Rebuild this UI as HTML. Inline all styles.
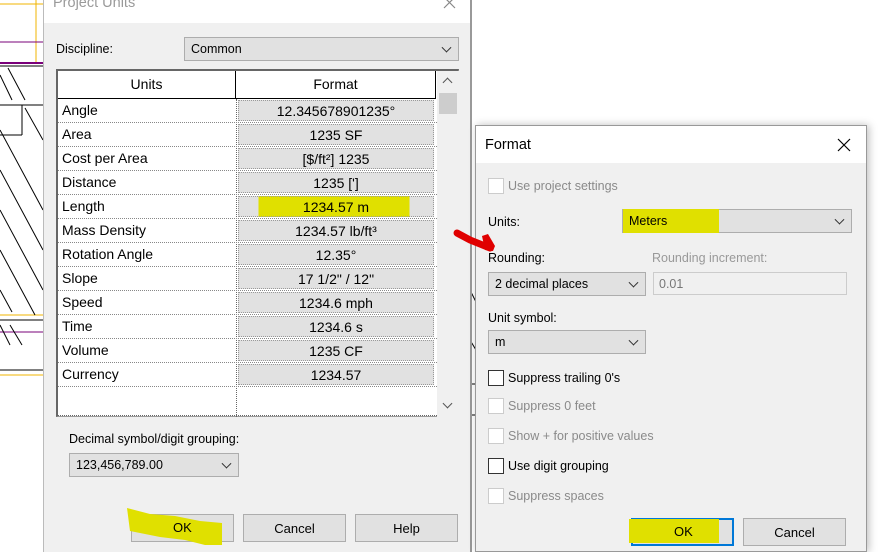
<!DOCTYPE html>
<html><head><meta charset="utf-8">
<style>
*{box-sizing:border-box;margin:0;padding:0}
body{width:891px;height:552px;overflow:hidden;background:#fff;position:relative;font-family:"Liberation Sans",sans-serif;color:#000}
.abs{position:absolute}
.sel{position:absolute;background:#e1e1e1;border:1px solid #adadad;font-size:12.5px;padding-left:6px;display:flex;align-items:center}
.sel .ch{position:absolute;right:8px;top:50%;width:7px;height:7px;border-right:1px solid #333;border-bottom:1px solid #333;transform:translateY(-70%) rotate(45deg)}
.btn{position:absolute;background:#e1e1e1;border:1px solid #adadad;font-size:13px;display:flex;align-items:center;justify-content:center}
.row{position:absolute;left:0;width:379px;height:24px;border-bottom:1px dotted #888}
.row .u{position:absolute;left:4px;top:3px;font-size:14px}
.row .f{position:absolute;left:180px;top:1px;width:196px;height:21px;background:#e1e1e1;border:1px dotted #999;font-size:14px;text-align:center;line-height:20px}
.cb{position:absolute;width:16px;height:16px;border:1px solid #333;background:#fff}
.cb.d{border-color:#ccc}
.lab{position:absolute;font-size:12.5px}
.g{color:#8a8a8a}
</style></head><body>
<svg class="abs" style="left:0;top:0" width="891" height="552">
<line x1="0" y1="4" x2="43" y2="4" stroke="#f0b400"/>
<line x1="36" y1="0" x2="36" y2="62" stroke="#f0b400"/>
<line x1="0" y1="42" x2="43" y2="42" stroke="#7a007a"/>
<line x1="0" y1="63" x2="43" y2="63" stroke="#7a007a" stroke-width="2"/>
<line x1="0" y1="66" x2="43" y2="66" stroke="#000"/>
<line x1="0" y1="105" x2="43" y2="105" stroke="#000"/>
<line x1="0" y1="135" x2="22" y2="135" stroke="#000"/>
<line x1="22" y1="105" x2="22" y2="135" stroke="#000"/>
<line x1="0" y1="315" x2="43" y2="315" stroke="#f0b400"/>
<line x1="0" y1="320" x2="43" y2="320" stroke="#000"/>
<line x1="0" y1="332" x2="43" y2="332" stroke="#7a007a"/>
<line x1="0" y1="370" x2="43" y2="370" stroke="#000"/>
<line x1="0" y1="375" x2="43" y2="375" stroke="#f0b400"/>
<g stroke="#000" stroke-width="1">
<line x1="0" y1="75" x2="12" y2="100"/><line x1="8" y1="68" x2="25" y2="100"/>
<line x1="0" y1="130" x2="43" y2="210"/><line x1="0" y1="170" x2="43" y2="250"/>
<line x1="0" y1="210" x2="43" y2="290"/><line x1="0" y1="250" x2="35" y2="315"/>
<line x1="0" y1="290" x2="12" y2="312"/><line x1="25" y1="108" x2="43" y2="140"/>
<line x1="0" y1="325" x2="10" y2="345"/><line x1="10" y1="325" x2="22" y2="345"/>
</g>
<g stroke="#000"><line x1="470" y1="290" x2="476" y2="302"/><line x1="470" y1="340" x2="476" y2="350"/><line x1="472" y1="384" x2="476" y2="384"/><line x1="472" y1="415" x2="476" y2="415"/></g>
</svg>
<div class="abs" style="left:43px;top:0;width:429px;height:552px;background:#f0f0f0;border-left:1px solid #bbb;border-right:2px solid #999">
 <div class="abs" style="left:0;top:0;width:426px;height:23px;background:#fff"></div>
 <div class="abs" style="left:9px;top:-5px;font-size:14.5px;color:#9a9a9a">Project Units</div>
 <svg class="abs" style="left:399px;top:0" width="14" height="10"><path d="M1 -3 L12 8 M12 -3 L1 8" stroke="#888" stroke-width="1.2"/></svg>
 <div class="lab" style="left:12px;top:42px">Discipline:</div>
 <div class="sel" style="left:140px;top:37px;width:275px;height:24px">Common<span class="ch"></span></div>
 <div class="abs" style="left:12px;top:69px;width:403px;height:348px;background:#fff;border:1px solid #999;border-left:2px solid #666;border-top:2px solid #666">
  <div class="abs" style="left:0;top:0;width:178px;height:28px;border-right:1px solid #000;border-bottom:1px solid #000;text-align:center;line-height:27px;font-size:14px">Units</div>
  <div class="abs" style="left:178px;top:0;width:200px;height:28px;border-bottom:1px solid #000;border-right:1px solid #000;text-align:center;line-height:27px;font-size:14px">Format</div>
  <div class="abs" style="left:178px;top:28px;width:0;height:318px;border-left:1px dotted #666"></div>
  <div class="row" style="top:28px"><span class="u">Angle</span><span class="f">12.345678901235°</span></div>
  <div class="row" style="top:52px"><span class="u">Area</span><span class="f">1235 SF</span></div>
  <div class="row" style="top:76px"><span class="u">Cost per Area</span><span class="f">[$/ft²] 1235</span></div>
  <div class="row" style="top:100px"><span class="u">Distance</span><span class="f">1235 [']</span></div>
  <div class="row" style="top:124px"><span class="u">Length</span><span class="f" style="background:linear-gradient(90deg,#e1e1e1 10%,#e0e000 10%,#e0e000 88%,#e1e1e1 88%)">1234.57 m</span></div>
  <div class="row" style="top:148px"><span class="u">Mass Density</span><span class="f">1234.57 lb/ft³</span></div>
  <div class="row" style="top:172px"><span class="u">Rotation Angle</span><span class="f">12.35°</span></div>
  <div class="row" style="top:196px"><span class="u">Slope</span><span class="f">17 1/2" / 12"</span></div>
  <div class="row" style="top:220px"><span class="u">Speed</span><span class="f">1234.6 mph</span></div>
  <div class="row" style="top:244px"><span class="u">Time</span><span class="f">1234.6 s</span></div>
  <div class="row" style="top:268px"><span class="u">Volume</span><span class="f">1235 CF</span></div>
  <div class="row" style="top:292px"><span class="u">Currency</span><span class="f">1234.57</span></div>
  <div class="abs" style="left:0;top:344px;width:379px;border-bottom:1px dotted #666"></div>
  <div class="abs" style="left:379px;top:0;width:22px;height:346px;background:#f0f0f0"></div>
  <div class="abs" style="left:381px;top:22px;width:18px;height:21px;background:#cdcdcd"></div>
  <div class="abs" style="left:386px;top:8px;width:7px;height:7px;border-left:1.5px solid #555;border-top:1.5px solid #555;transform:rotate(45deg)"></div>
  <div class="abs" style="left:386px;top:329px;width:7px;height:7px;border-right:1.5px solid #555;border-bottom:1.5px solid #555;transform:rotate(45deg)"></div>
 </div>
 <div class="lab" style="left:25px;top:432px">Decimal symbol/digit grouping:</div>
 <div class="sel" style="left:25px;top:453px;width:170px;height:24px">123,456,789.00<span class="ch"></span></div>
 <div class="btn" style="left:87px;top:514px;width:103px;height:28px"></div>
 <div class="btn" style="left:199px;top:514px;width:103px;height:28px">Cancel</div>
 <div class="btn" style="left:311px;top:514px;width:103px;height:28px">Help</div>
</div>
<svg class="abs" style="left:0;top:0" width="891" height="552">
<path d="M127 508 L150 514 L175 516 L200 521 L222 523 L222 545 L205 545 L185 540 L160 537 L130 531 Z" fill="#e0e000"/>
</svg>
<div class="abs" style="left:173px;top:520px;font-size:13px">OK</div>
<div class="abs" style="left:475px;top:125px;width:392px;height:427px;background:#f0f0f0;border:1px solid #999;box-shadow:2px 0 8px rgba(0,0,0,0.25)">
 <div class="abs" style="left:0;top:0;width:390px;height:37px;background:#fff"></div>
 <div class="abs" style="left:9px;top:11px;font-size:14.5px">Format</div>
 <svg class="abs" style="left:361px;top:12px" width="14" height="14"><path d="M1 1 L13 13 M13 1 L1 13" stroke="#000" stroke-width="1.2"/></svg>
 <div class="cb d" style="left:12px;top:52px"></div><div class="lab g" style="left:32px;top:53px">Use project settings</div>
 <div class="lab" style="left:12px;top:89px">Units:</div>
 <div class="sel" style="left:146px;top:83px;width:230px;height:24px"><span style="position:absolute;left:0;top:-1px;width:96px;height:24px;background:#e0e000"></span><span style="position:relative">Meters</span><span class="ch"></span></div>
 <div class="lab" style="left:12px;top:125px">Rounding:</div>
 <div class="lab g" style="left:176px;top:125px;color:#999">Rounding increment:</div>
 <div class="sel" style="left:12px;top:146px;width:158px;height:24px">2 decimal places<span class="ch"></span></div>
 <div class="abs" style="left:177px;top:146px;width:194px;height:23px;border:1px solid #ccc;background:#f0f0f0;font-size:12.5px;padding:4px 5px;color:#777">0.01</div>
 <div class="lab" style="left:12px;top:185px">Unit symbol:</div>
 <div class="sel" style="left:12px;top:204px;width:158px;height:24px">m<span class="ch"></span></div>
 <div class="cb" style="left:12px;top:244px"></div><div class="lab" style="left:32px;top:245px">Suppress trailing 0's</div>
 <div class="cb d" style="left:12px;top:272px"></div><div class="lab g" style="left:32px;top:273px">Suppress 0 feet</div>
 <div class="cb d" style="left:12px;top:302px"></div><div class="lab g" style="left:32px;top:303px">Show + for positive values</div>
 <div class="cb" style="left:12px;top:332px"></div><div class="lab" style="left:32px;top:333px">Use digit grouping</div>
 <div class="cb d" style="left:12px;top:362px"></div><div class="lab g" style="left:32px;top:363px">Suppress spaces</div>
 <div class="btn" style="left:155px;top:392px;width:103px;height:28px;border:2px solid #0078d7;background:#e1e1e1"></div>
 <div class="abs" style="left:153px;top:393px;width:90px;height:24px;background:#e0e000"></div>
 <div class="abs" style="left:198px;top:398px;font-size:13px">OK</div>
 <div class="btn" style="left:267px;top:392px;width:103px;height:28px">Cancel</div>
</div>
<svg class="abs" style="left:0;top:0" width="891" height="552">
<path d="M457 233 L470 240 L490 248" stroke="#e00000" stroke-width="7" stroke-linecap="round" fill="none"/>
<path d="M482 236 L488 234 L495 246 L493 251 L485 250 Z" fill="#e00000"/>
</svg>
</body></html>
